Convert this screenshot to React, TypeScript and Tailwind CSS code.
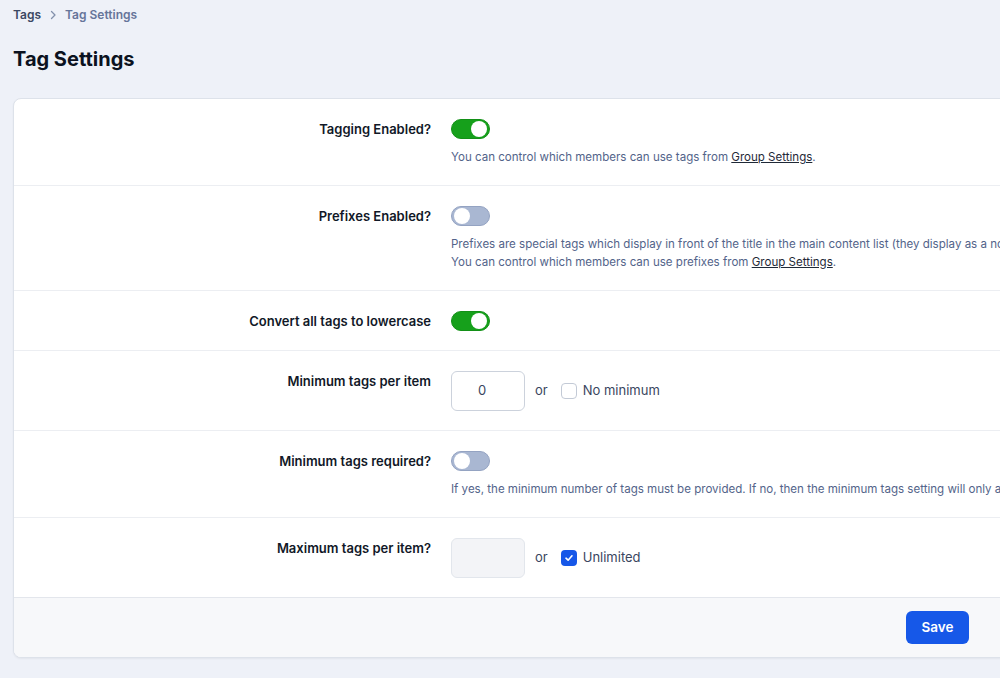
import React from "react";

const font = { fontFamily: "Inter, 'Noto Sans', sans-serif" };

function Toggle({ on }: { on: boolean }) {
  return (
    <div
      className={
        "relative w-[39px] h-[20px] rounded-full border " +
        (on ? "bg-[#16a01b] border-[#139017]" : "bg-[#a9b7d2] border-[#94a3c2]")
      }
    >
      <div
        className={
          "absolute top-[1px] w-[16px] h-[16px] rounded-full bg-white " +
          (on ? "right-[2px]" : "left-[2px]")
        }
      />
    </div>
  );
}

function Checkbox({ checked }: { checked: boolean }) {
  return checked ? (
    <div className="w-[16px] h-[16px] rounded-[4px] bg-[#1657e8] flex items-center justify-center">
      <svg width="10" height="10" viewBox="0 0 10 10" fill="none">
        <path d="M2 5.2 L4.1 7.2 L8 2.8" stroke="white" strokeWidth="1.6" strokeLinecap="round" strokeLinejoin="round" />
      </svg>
    </div>
  ) : (
    <div className="w-[16px] h-[16px] rounded-[4px] border border-[#c3cad6] bg-white" />
  );
}

function Row({
  label,
  children,
}: {
  label: string;
  children: React.ReactNode;
}) {
  return (
    <div className="flex border-b border-[#eceef2] pt-5 pb-[19px]">
      <div className="w-[417px] shrink-0 text-right text-[13px] leading-[20px] font-semibold text-[#111827]">
        {label}
      </div>
      <div className="ml-5 flex-1">{children}</div>
    </div>
  );
}

function Desc({ children }: { children: React.ReactNode }) {
  return <div className="mt-[9px] text-[11.55px] leading-[18px] text-[#53648a] whitespace-nowrap">{children}</div>;
}

function Link({ children }: { children: React.ReactNode }) {
  return <span className="underline text-[#1f2937]">{children}</span>;
}

export default function App() {
  return (
    <div className="w-[1000px] h-[678px] overflow-hidden bg-[#eef1f8]" style={font}>
      <div className="px-[13px]">
        <div className="flex items-center h-[30px] text-[12px] font-semibold">
          <span className="text-[#3b4863]">Tags</span>
          <svg className="mx-[8px]" width="8" height="10" viewBox="0 0 8 10" fill="none">
            <path d="M2.5 1.5 L6 5 L2.5 8.5" stroke="#8290ab" strokeWidth="1.3" strokeLinecap="round" strokeLinejoin="round" />
          </svg>
          <span className="text-[#66759a]">Tag Settings</span>
        </div>
        <h1 className="mt-[14px] text-[20px] leading-[30px] font-bold text-[#0b1220]">Tag Settings</h1>
        <div className="mt-[24px] w-[1200px] bg-white border border-[#dde2ea] rounded-[8px] shadow-[0_1px_2px_rgba(0,0,0,0.05)] overflow-hidden">
          <Row label="Tagging Enabled?">
            <Toggle on />
            <Desc>
              You can control which members can use tags from <Link>Group Settings</Link>.
            </Desc>
          </Row>
          <Row label="Prefixes Enabled?">
            <Toggle on={false} />
            <Desc>
              Prefixes are special tags which display in front of the title in the main content list (they display as a normal tag inside the content itself).
              <br />
              You can control which members can use prefixes from <Link>Group Settings</Link>.
            </Desc>
          </Row>
          <Row label="Convert all tags to lowercase">
            <Toggle on />
          </Row>
          <Row label="Minimum tags per item">
            <div className="flex items-center">
              <div className="w-[74px] h-[40px] rounded-[6px] border border-[#ccd2dc] flex items-center justify-center pr-[12px] text-[13px] text-[#3a4660]">
                0
              </div>
              <span className="ml-[10px] text-[13px] text-[#3a4660]">or</span>
              <div className="ml-[13px]">
                <Checkbox checked={false} />
              </div>
              <span className="ml-[6px] text-[13px] text-[#3a4660]">No minimum</span>
            </div>
          </Row>
          <Row label="Minimum tags required?">
            <Toggle on={false} />
            <Desc>
              If yes, the minimum number of tags must be provided. If no, then the minimum tags setting will only apply when tags are added.
            </Desc>
          </Row>
          <Row label="Maximum tags per item?">
            <div className="flex items-center">
              <div className="w-[74px] h-[40px] rounded-[6px] border border-[#e2e6ec] bg-[#f3f4f7]" />
              <span className="ml-[10px] text-[13px] text-[#3a4660]">or</span>
              <div className="ml-[13px]">
                <Checkbox checked />
              </div>
              <span className="ml-[6px] text-[13px] text-[#3a4660]">Unlimited</span>
            </div>
          </Row>
          <div className="h-[60px] bg-[#f7f8fa] flex items-center pl-[892px] -mt-px border-t border-[#e3e6ec]">
            <button className="w-[63px] h-[33px] rounded-[6px] bg-[#1658e8] text-white text-[13.5px] font-semibold">
              Save
            </button>
          </div>
        </div>
      </div>
    </div>
  );
}
